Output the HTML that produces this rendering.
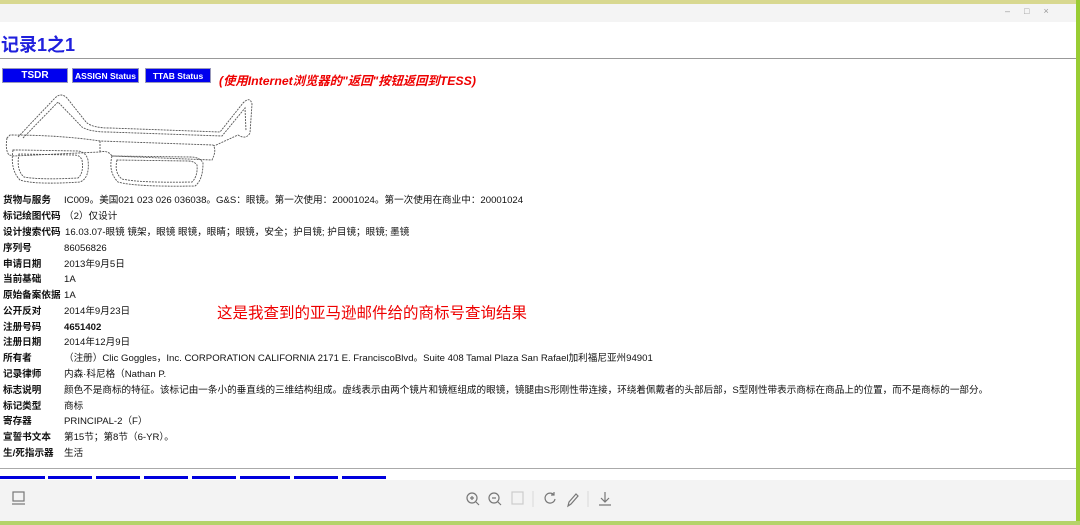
<!DOCTYPE html>
<html><head><meta charset="utf-8"><style>
*{margin:0;padding:0;box-sizing:border-box}
body{width:1080px;height:525px;overflow:hidden;background:#fff;position:relative;font-family:"Liberation Sans","Noto Sans CJK SC",sans-serif;font-size:9.6px;color:#111}
.a{position:absolute;white-space:nowrap}
.btn{position:absolute;top:68px;height:15px;background:#0000ee;color:#fff;font-weight:bold;font-size:8.5px;text-align:center;line-height:14px;border:1px solid #99b}
.row{position:absolute;left:3px;white-space:nowrap;height:16px;line-height:16px}
.row b{display:inline-block;width:61px;font-weight:bold}
.bb{position:absolute;top:476px;height:3px;background:#0000dd}
</style></head><body>
<div class="a" style="left:0;top:0;width:1080px;height:4px;background:#d8d890"></div>
<div class="a" style="left:0;top:4px;width:1076px;height:18px;background:#f4f4f4"></div>
<div class="a" style="left:1076px;top:0;width:4px;height:525px;background:#9c3"></div>
<div class="a" style="left:1005px;top:6px;color:#999;font-size:9px;letter-spacing:14px">–□×</div>
<div class="a" style="left:1px;top:31px;font-size:18px;font-weight:bold;color:#2020dd">记录1之1</div>
<div class="a" style="left:0;top:58px;width:1076px;height:1px;background:#999"></div>
<div class="btn" style="left:2px;width:66px;font-size:10px">TSDR</div>
<div class="btn" style="left:72px;width:67px">ASSIGN Status</div>
<div class="btn" style="left:145px;width:66px">TTAB Status</div>
<div class="a" style="left:219px;top:71px;color:#e00;font-size:12.3px;font-weight:bold;font-style:italic">(使用Internet浏览器的"返回"按钮返回到TESS)</div>
<svg class="a" style="left:0;top:0" width="270" height="195" fill="none" stroke="#555" stroke-width="0.9" stroke-dasharray="2 1">
<path d="M7 138 Q5 150 9 155 L14 156 L100 152 Q108 150 112 156 L212 160 Q217 150 213 145 L100 141 Q60 135 10 135 Z"/>
<path d="M13 150 Q10 170 20 180 Q35 185 80 182 Q90 178 88 160 Q86 152 78 151 L20 150 Z"/>
<path d="M19 154 Q16 170 24 177 Q40 180 78 178 Q84 173 82 160 Q80 155 74 155 Z"/>
<path d="M112 156 Q108 172 118 182 Q135 187 195 186 Q203 180 203 163 Q200 157 190 157 Z"/>
<path d="M117 160 Q114 173 122 179 Q140 183 192 182 Q198 176 197 165 Q194 161 188 161 Z"/>
<path d="M18 137 L55 98 Q61 92 67 98 L86 122 Q92 128 110 128 L220 132 L243 103 Q250 96 252 104 L250 133 Q246 140 238 135 L214 146"/>
<path d="M23 138 L58 102 L82 127 Q90 132 108 132 L222 136 L245 108 L246 131"/>
<path d="M100 141 L100 152"/>
</svg>
<div class="row" style="top:193px"><b>货物与服务</b>IC009。美国021 023 026 036038。G&amp;S：眼镜。第一次使用：20001024。第一次使用在商业中：20001024</div>
<div class="row" style="top:209px"><b>标记绘图代码</b>（2）仅设计</div>
<div class="row" style="top:225px"><b style="width:62px">设计搜索代码</b>16.03.07-眼镜 镜架，眼镜 眼镜，眼睛；眼镜，安全；护目镜; 护目镜；眼镜; 墨镜</div>
<div class="row" style="top:241px"><b>序列号</b>86056826</div>
<div class="row" style="top:257px"><b>申请日期</b>2013年9月5日</div>
<div class="row" style="top:272px"><b>当前基础</b>1A</div>
<div class="row" style="top:288px"><b>原始备案依据</b>1A</div>
<div class="row" style="top:304px"><b>公开反对</b>2014年9月23日</div>
<div class="row" style="top:320px"><b>注册号码</b><span style="font-weight:bold">4651402</span></div>
<div class="row" style="top:335px"><b>注册日期</b>2014年12月9日</div>
<div class="row" style="top:351px"><b>所有者</b>（注册）Clic Goggles，Inc. CORPORATION CALIFORNIA 2171 E. FranciscoBlvd。Suite 408 Tamal Plaza San Rafael加利福尼亚州94901</div>
<div class="row" style="top:367px"><b>记录律师</b>内森·科尼格（Nathan P.</div>
<div class="row" style="top:383px"><b>标志说明</b>颜色不是商标的特征。该标记由一条小的垂直线的三维结构组成。虚线表示由两个镜片和镜框组成的眼镜，镜腿由S形刚性带连接，环绕着佩戴者的头部后部，S型刚性带表示商标在商品上的位置，而不是商标的一部分。</div>
<div class="row" style="top:399px"><b>标记类型</b>商标</div>
<div class="row" style="top:414px"><b>寄存器</b>PRINCIPAL-2（F）</div>
<div class="row" style="top:430px"><b>宣誓书文本</b>第15节；第8节（6-YR）。</div>
<div class="row" style="top:446px"><b>生/死指示器</b>生活</div>
<div class="a" style="left:217px;top:301px;color:#e00;font-size:15.5px">这是我查到的亚马逊邮件给的商标号查询结果</div>
<div class="a" style="left:0;top:468px;width:1076px;height:1px;background:#aaa"></div>
<div class="bb" style="left:0;width:45px"></div><div class="bb" style="left:48px;width:44px"></div>
<div class="bb" style="left:96px;width:44px"></div><div class="bb" style="left:144px;width:44px"></div>
<div class="bb" style="left:192px;width:44px"></div><div class="bb" style="left:240px;width:50px"></div>
<div class="bb" style="left:294px;width:44px"></div><div class="bb" style="left:342px;width:44px"></div>
<div class="a" style="left:0;top:480px;width:1076px;height:41px;background:#f3f3f3"></div>
<div class="a" style="left:0;top:521px;width:1080px;height:4px;background:#b5d36a"></div>
<svg class="a" style="left:0;top:480px" width="1076" height="41" fill="none" stroke="#777" stroke-width="1.2">
<rect x="13" y="12" width="11" height="9"/><path d="M12 24h13"/>
<circle cx="472" cy="18" r="5"/><path d="M476 22l3 3M470 18h4M472 16v4"/>
<circle cx="494" cy="18" r="5"/><path d="M498 22l3 3M492 18h4"/>
<rect x="512" y="12" width="11" height="12" stroke="#ccc"/>
<path d="M533 11v16M588 11v16" stroke="#ddd"/>
<path d="M554 15a5 5 0 1 0 1 4M554 12v3h-3"/>
<path d="M568 26l1-4 7-8 2 2-7 8z"/>
<path d="M605 12v10M601 18l4 4 4-4M599 25h12"/>
</svg>
</body></html>
